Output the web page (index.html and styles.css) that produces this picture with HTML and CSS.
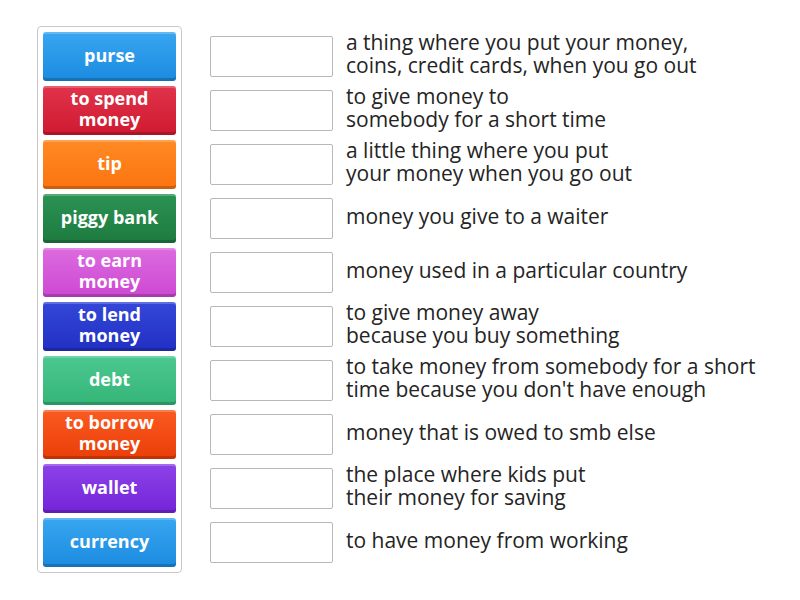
FILE: index.html
```html
<!DOCTYPE html>
<html>
<head>
<meta charset="utf-8">
<link rel="stylesheet" href="styles.css">
</head>
<body>
<div class="page">
  <div class="bank">
    <div class="tile c-blue">purse</div>
    <div class="tile c-red">to spend money</div>
    <div class="tile c-orange">tip</div>
    <div class="tile c-green">piggy bank</div>
    <div class="tile c-pink">to earn money</div>
    <div class="tile c-navy">to lend money</div>
    <div class="tile c-mint">debt</div>
    <div class="tile c-vermilion">to borrow money</div>
    <div class="tile c-purple">wallet</div>
    <div class="tile c-blue">currency</div>
  </div>
  <div class="rows">
    <div class="row"><div class="slot"></div><div class="def">a thing where you put your money,<br>coins, credit cards, when you go out</div></div>
    <div class="row"><div class="slot"></div><div class="def">to give money to<br>somebody for a short time</div></div>
    <div class="row"><div class="slot"></div><div class="def">a little thing where you put<br>your money when you go out</div></div>
    <div class="row"><div class="slot"></div><div class="def">money you give to a waiter</div></div>
    <div class="row"><div class="slot"></div><div class="def">money used in a particular country</div></div>
    <div class="row"><div class="slot"></div><div class="def">to give money away<br>because you buy something</div></div>
    <div class="row"><div class="slot"></div><div class="def">to take money from somebody for a short<br>time because you don't have enough</div></div>
    <div class="row"><div class="slot"></div><div class="def">money that is owed to smb else</div></div>
    <div class="row"><div class="slot"></div><div class="def">the place where kids put<br>their money for saving</div></div>
    <div class="row"><div class="slot"></div><div class="def">to have money from working</div></div>
  </div>
</div>
</body>
</html>
```

FILE: styles.css
```css
html, body {
  margin: 0;
  padding: 0;
  background: #ffffff;
}
body {
  font-family: "Open Sans", "Noto Sans", sans-serif;
}
.page {
  display: flex;
  align-items: flex-start;
  padding: 26px 0 0 37px;
}
.bank {
  display: flex;
  flex-direction: column;
  gap: 5px;
  padding: 5px;
  border: 1px solid #c8c8c8;
  border-radius: 4px;
}
.tile {
  width: 133px;
  height: 49px;
  box-sizing: border-box;
  display: flex;
  align-items: center;
  justify-content: center;
  text-align: center;
  color: #ffffff;
  font-weight: 700;
  font-size: 18px;
  line-height: 21px;
  padding: 0 12px 3px;
  border-radius: 3px;
  box-shadow: inset 0 -3px 0 rgba(0,0,0,0.18), inset 0 2px 0 rgba(255,255,255,0.22);
}
.c-blue { background: linear-gradient(#38a6f0, #1b8be0); }
.c-red { background: linear-gradient(#e0334a, #cf1a30); }
.c-orange { background: linear-gradient(#ff8a24, #fb7410); }
.c-green { background: linear-gradient(#2a9352, #1e7a40); }
.c-pink { background: linear-gradient(#dc6be0, #cd48d2); }
.c-navy { background: linear-gradient(#3447d8, #2030c4); }
.c-mint { background: linear-gradient(#4cc890, #35b578); }
.c-vermilion { background: linear-gradient(#fa5a20, #ea3e08); }
.c-purple { background: linear-gradient(#8c42e8, #7424d8); }
.rows {
  display: flex;
  flex-direction: column;
  gap: 5px;
  padding-top: 6px;
  margin-left: 28px;
}
.row {
  height: 49px;
  display: flex;
  align-items: center;
  gap: 13px;
}
.slot {
  width: 123px;
  height: 41px;
  box-sizing: border-box;
  border: 1px solid #b8b8b8;
  border-radius: 2px;
  background: #ffffff;
  flex: none;
}
.def {
  font-size: 21px;
  line-height: 23px;
  color: #242424;
  white-space: nowrap;
  padding-bottom: 5px;
}
```
